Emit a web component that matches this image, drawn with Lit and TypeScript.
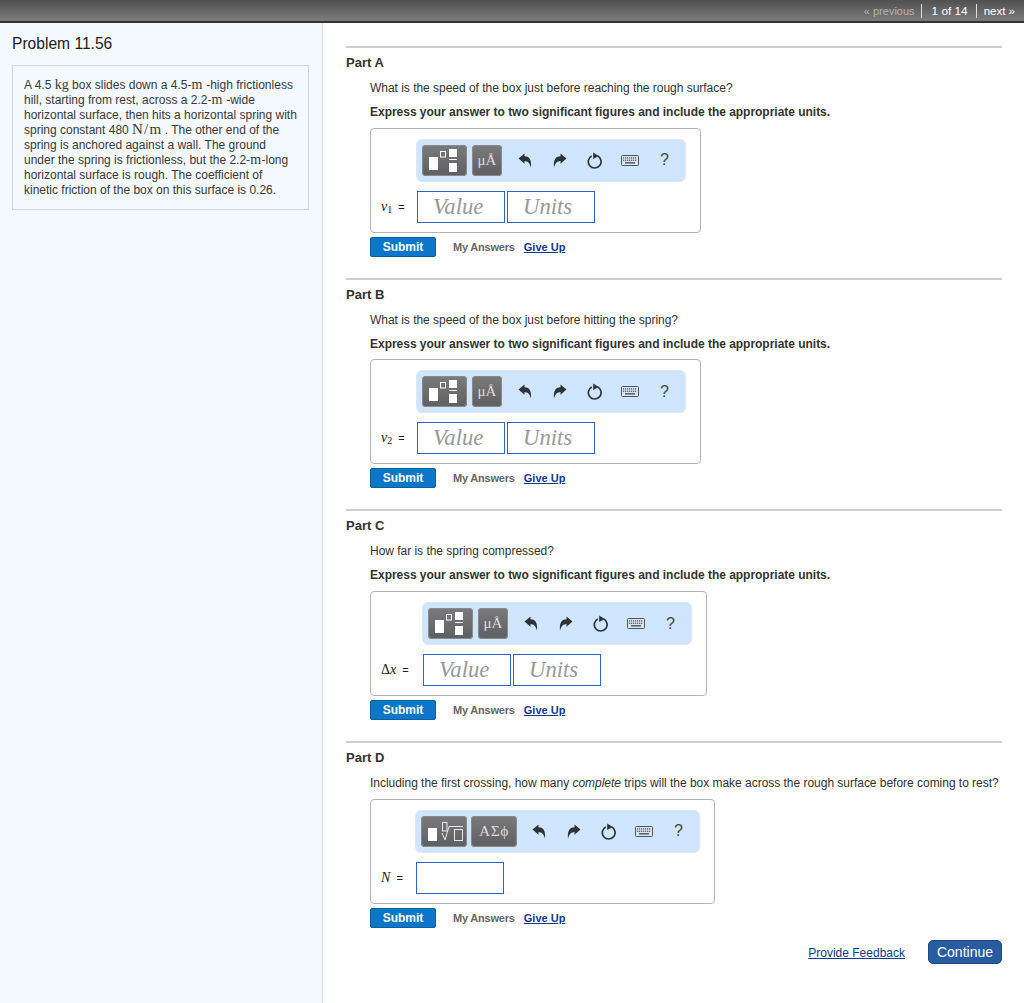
import { LitElement, html, css, svg } from "lit";
import { customElement } from "lit/decorators.js";

const undo = html`<svg class="ico" width="14" height="15" viewBox="0 0 14 15"><path d="M0.5 5.4 L6.5 0.5 V3.3 C10.8 3.3 13.8 6.2 13 14.5 C12 10.8 10 8 6.5 8 V10.8 Z" fill="#2f3338"/></svg>`;
const redo = html`<svg class="ico" width="14" height="15" viewBox="0 0 14 15"><path d="M13.5 5.4 L7.5 0.5 V3.3 C3.2 3.3 0.2 6.2 1 14.5 C2 10.8 4 8 7.5 8 V10.8 Z" fill="#2f3338"/></svg>`;
const reset = html`<svg class="ico" width="16" height="17" viewBox="0 0 16 17"><path d="M10.4 3.8 A6.4 6.4 0 1 1 4.8 3.9" fill="none" stroke="#2f3338" stroke-width="1.7"/><path d="M6.2 0.6 L11.6 3.9 L6.2 7 Z" fill="#2f3338"/></svg>`;
const keyboard = html`<svg class="ico" width="18" height="11" viewBox="0 0 18 11"><rect x="0.5" y="0.5" width="17" height="10" rx="1" fill="#dbe4ee" stroke="#4a5560"/>${[2, 4, 6, 8, 10, 12, 14].map(
  (x) => svg`<rect x="${x}" y="2.2" width="1.2" height="1.4" fill="#5a6570"/><rect x="${x}" y="4.6" width="1.2" height="1.4" fill="#5a6570"/>`
)}<rect x="4" y="7" width="10" height="1.6" fill="#5a6570"/></svg>`;

const templateIcon = html`<svg width="45" height="31" viewBox="0 0 45 31"><rect x="7" y="12" width="9" height="13" fill="#fff"/><rect x="18.5" y="6.5" width="5" height="5.5" fill="none" stroke="#fff"/><rect x="27" y="4" width="8" height="8" fill="#fff"/><rect x="27" y="14" width="8" height="1" fill="#fff"/><rect x="27" y="18" width="8" height="9" fill="#fff"/></svg>`;
const radicalIcon = html`<svg width="46" height="31" viewBox="0 0 46 31"><rect x="7" y="12" width="9" height="13" fill="#fff"/><rect x="21.5" y="6.5" width="4.5" height="8.5" fill="none" stroke="#e8e8e8"/><path d="M21 17 L24 24 L28 10.5 H42" fill="none" stroke="#e8e8e8" stroke-width="1"/><rect x="33.5" y="13.5" width="8" height="11" fill="none" stroke="#e8e8e8"/></svg>`;

interface PartDef {
  name: string;
  q: unknown;
  express: boolean;
  label: unknown;
  labelW: number;
  units: boolean;
}

const parts: PartDef[] = [
  { name: "Part A", q: "What is the speed of the box just before reaching the rough surface?", express: true, label: html`<i>v</i><sub>1</sub>`, labelW: 36, units: true },
  { name: "Part B", q: "What is the speed of the box just before hitting the spring?", express: true, label: html`<i>v</i><sub>2</sub>`, labelW: 36, units: true },
  { name: "Part C", q: "How far is the spring compressed?", express: true, label: html`Δ<i>x</i>`, labelW: 42, units: true },
  { name: "Part D", q: html`Including the first crossing, how many <i>complete</i> trips will the box make across the rough surface before coming to rest?`, express: false, label: html`<i>N</i>`, labelW: 35, units: false },
];

@customElement("app-root")
export class AppRoot extends LitElement {
  static styles = css`
    :host { display: flex; flex-direction: column; min-height: 100vh; font-family: "Liberation Sans", Arial, sans-serif; color: #333; background: #fff; }
    .top { height: 21px; flex: none; background: linear-gradient(#505050, #7c7c7c); border-bottom: 2px solid #333; display: flex; justify-content: flex-end; align-items: center; font-size: 12px; color: #fff; padding-right: 9px; }
    .top span { line-height: 14px; }
    .top .prev { color: #b5b5b5; border-right: 1px solid #ddd; padding-right: 6px; font-size: 11px; }
    .top .count { padding: 0 8px 0 10px; border-right: 1px solid #ddd; font-size: 11.8px; }
    .top .next { padding-left: 7px; font-size: 11.5px; }
    .main { flex: 1; display: flex; }
    .side { flex: none; box-sizing: border-box; background: #f4f8ff; border-right: 1px solid #d5dde8; width: 323px; padding: 12px 13px 0 12px; }
    h1 { margin: 0; font-size: 15.6px; line-height: 18px; font-weight: normal; color: #222; }
    .prob { margin-top: 12px; border: 1px solid #c6d5e4; padding: 12px 11px; font-size: 12px; line-height: 15px; color: #3a3a3a; height: 145px; box-sizing: border-box; }
    .m { font-family: "Liberation Serif", serif; font-size: 14px; line-height: 0; }
    .m.w { letter-spacing: 1.5px; margin-right: -1px; }
    .m.n { font-size: 15px; letter-spacing: 1.2px; margin-right: -1px; }
    .content { flex: 1; padding: 23px 22px 0 23px; min-width: 0; }
    .part { border-top: 2px solid #cfcfcf; height: 229.67px; }
    .part.d { height: auto; }
    .pname { font-size: 13px; font-weight: bold; line-height: 15px; margin-top: 7px; color: #333; }
    .body { padding-left: 24px; }
    .q { font-size: 12px; line-height: 15px; margin-top: 11px; color: #333; white-space: nowrap; letter-spacing: -0.025px; }
    .exp { font-size: 12px; font-weight: bold; line-height: 15px; margin-top: 9px; color: #333; letter-spacing: -0.025px; }
    .box { display: inline-block; box-sizing: border-box; border: 1px solid #b5b5b5; border-radius: 4px; padding: 10px 14px 0 10px; margin-top: 7.7px; height: 105px; vertical-align: top; }
    .part.d .box { margin-top: 8px; }
    .tb { height: 43px; box-sizing: border-box; background: #cfe4fd; border-radius: 6px; border: 1px solid #dde8f2; display: flex; align-items: center; padding: 0 3px 0 5px; }
    .btn { height: 31px; border-radius: 4px; background: linear-gradient(#7a7a7c, #5f5f61); box-shadow: inset 0 0 0 1px #8a8a8a; box-sizing: border-box; display: flex; align-items: center; justify-content: center; color: #ddd; font-family: "Liberation Serif", serif; font-size: 15px; margin-right: 5px; }
    .btn.a { width: 45px; }
    .btn.b { width: 30px; }
    .btn.c { width: 46px; font-size: 15.5px; letter-spacing: 0.5px; margin-right: 4px; }
    .act { width: 35px; display: flex; justify-content: center; align-items: center; font-size: 16px; color: #444; }
    .row { display: flex; align-items: center; margin-top: 9px; height: 32px; }
    .lab { font-family: "Liberation Serif", serif; font-size: 14px; color: #222; flex: none; box-sizing: border-box; white-space: nowrap; }
    .lab sub { font-size: 10px; vertical-align: -2px; line-height: 0; }
    .lab .eq { font-family: "Liberation Sans", sans-serif; font-size: 11px; margin-left: 3px; }
    .inp { width: 88px; height: 32px; box-sizing: border-box; border: 1px solid #2c64d0; background: #fff; font-family: "Liberation Serif", serif; font-style: italic; font-size: 22.7px; color: #999; display: flex; align-items: center; padding-left: 15px; margin-right: 2px; }
    .actions { display: flex; align-items: center; margin-top: 4px; height: 20px; }
    .submit { width: 66px; height: 20px; box-sizing: border-box; background: #0c77c9; border: 1px solid #0a5f9f; border-radius: 2px; color: #fff; font-weight: bold; font-size: 12px; display: flex; align-items: center; justify-content: center; }
    .my { font-size: 11px; font-weight: bold; color: #666; margin-left: 17px; letter-spacing: -0.2px; }
    .give { font-size: 11px; font-weight: bold; color: #0f3a94; text-decoration: underline; margin-left: 9px; }
    .foot { display: flex; justify-content: flex-end; align-items: center; margin-top: 12px; }
    .fb { font-size: 12px; color: #0f3a94; text-decoration: underline; margin-right: 23px; padding-top: 2px; }
    .cont { width: 74px; height: 24px; box-sizing: border-box; background: #285c9f; border: 1px solid #1d4a85; border-radius: 5px; color: #fff; font-size: 14px; display: flex; align-items: center; justify-content: center; }
  `;

  renderPart(p: PartDef) {
    const d = !p.units;
    return html`
      <div class="part ${d ? "d" : ""}">
        <div class="pname">${p.name}</div>
        <div class="body">
          <div class="q">${p.q}</div>
          ${p.express ? html`<div class="exp">Express your answer to two significant figures and include the appropriate units.</div>` : null}
          <div class="box">
            <div class="tb" style="margin-left:${p.labelW - 1}px">
              ${d
                ? html`<div class="btn c">${radicalIcon}</div><div class="btn c">ΑΣϕ</div>`
                : html`<div class="btn a">${templateIcon}</div><div class="btn b">μÅ</div>`}
              <div class="act">${undo}</div>
              <div class="act">${redo}</div>
              <div class="act">${reset}</div>
              <div class="act">${keyboard}</div>
              <div class="act">?</div>
            </div>
            <div class="row">
              <div class="lab" style="width:${p.labelW}px">${p.label}<span class="eq"> =</span></div>
              ${p.units
                ? html`<div class="inp">Value</div><div class="inp">Units</div>`
                : html`<div class="inp"></div>`}
            </div>
          </div>
          <div class="actions">
            <div class="submit">Submit</div>
            <span class="my">My Answers</span>
            <span class="give">Give Up</span>
          </div>
        </div>
      </div>
    `;
  }

  render() {
    return html`
      <div class="top">
        <span class="prev">« previous</span><span class="count">1 of 14</span><span class="next">next »</span>
      </div>
      <div class="main">
        <div class="side">
          <h1>Problem 11.56</h1>
          <div class="prob">
            A 4.5 <span class="m">kg</span> box slides down a 4.5-<span class="m w">m</span> -high frictionless hill, starting from rest, across a 2.2-<span class="m w">m</span> -wide horizontal surface, then hits a horizontal spring with spring constant 480 <span class="m n">N/m</span> . The other end of the spring is anchored against a wall. The ground under the spring is frictionless, but the 2.2-<span class="m w">m</span>-long horizontal surface is rough. The coefficient of kinetic friction of the box on this surface is 0.26.
          </div>
        </div>
        <div class="content">
          ${parts.map((p) => this.renderPart(p))}
          <div class="foot">
            <span class="fb">Provide Feedback</span>
            <div class="cont">Continue</div>
          </div>
        </div>
      </div>
    `;
  }
}
